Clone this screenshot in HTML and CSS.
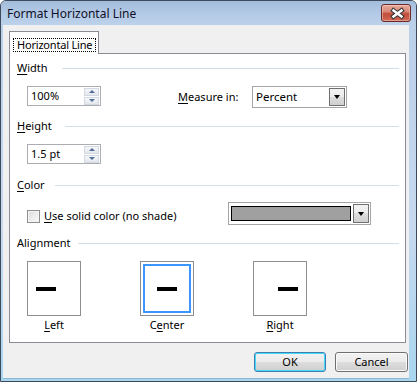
FILE: index.html
```html
<!DOCTYPE html>
<html>
<head>
<meta charset="utf-8">
<link rel="stylesheet" href="styles.css">
</head>
<body>
<div class="window">
  <div class="titlebar">
    <span class="title">Format Horizontal Line</span>
    <div class="close">
      <svg width="30" height="18" viewBox="0 0 30 18">
        <path d="M12.5 6.5 L20.5 12.5 M20.5 6.5 L12.5 12.5" stroke="#3a3a3a" stroke-width="4.6" stroke-linecap="square" fill="none"/>
        <path d="M12.5 6.5 L20.5 12.5 M20.5 6.5 L12.5 12.5" stroke="#ffffff" stroke-width="2.4" stroke-linecap="square" fill="none"/>
      </svg>
    </div>
  </div>
  <div class="client">
    <div class="tabs">
      <div class="tab"><span class="focus">Horizontal Line</span></div>
    </div>
    <div class="panel">
      <div class="ghead gh-width"><span><u>W</u>idth</span><i class="rule"></i></div>
      <div class="row row-width">
        <div class="spin"><span class="val">100%</span><div class="spin-btns"><b class="sb up"></b><b class="sb down"></b></div></div>
        <span class="measure"><u>M</u>easure in:</span>
        <div class="select"><span class="sel-text">Percent</span><div class="drop-btn"><i class="arrow"></i></div></div>
      </div>

      <div class="ghead gh-height"><span><u>H</u>eight</span><i class="rule"></i></div>
      <div class="row row-height">
        <div class="spin"><span class="val">1.5 pt</span><div class="spin-btns"><b class="sb up"></b><b class="sb down"></b></div></div>
      </div>

      <div class="ghead gh-color"><span><u>C</u>olor</span><i class="rule"></i></div>
      <div class="row row-color">
        <div class="check-wrap"><i class="checkbox"></i><span><u>U</u>se solid color (no shade)</span></div>
        <div class="color-select"><div class="swatch"></div><div class="drop-btn"><i class="arrow"></i></div></div>
      </div>

      <div class="ghead gh-align"><span>Alignment</span><i class="rule"></i></div>
      <div class="row row-align">
        <div class="opt">
          <div class="abox left"><i class="dash"></i></div>
          <span class="olabel"><u>L</u>eft</span>
        </div>
        <div class="opt">
          <div class="abox center selected"><i class="dash"></i></div>
          <span class="olabel">C<u>e</u>nter</span>
        </div>
        <div class="opt">
          <div class="abox right"><i class="dash"></i></div>
          <span class="olabel"><u>R</u>ight</span>
        </div>
      </div>
    </div>
    <div class="buttons">
      <div class="btn default">OK</div>
      <div class="btn">Cancel</div>
    </div>
  </div>
</div>
</body>
</html>
```
FILE: styles.css
```css
* { box-sizing: border-box; }
html, body { margin: 0; padding: 0; }
body {
  font-family: "Noto Sans", "Open Sans", sans-serif;
  font-size: 11px;
  line-height: 14px;
  color: #000;
  background: #fff;
}
u { text-decoration: underline; text-underline-offset: 2px; }

.window {
  width: 417px;
  height: 382px;
  display: flex;
  flex-direction: column;
  border: 1px solid #3c4a5c;
  border-radius: 6px 6px 0 0;
  background: linear-gradient(#b9cfe8, #c6d9ef 60%, #a9d6ef);
  overflow: hidden;
}

.titlebar {
  height: 24px;
  flex: none;
  display: flex;
  align-items: flex-start;
  background: linear-gradient(#a4bddc, #b5cbe6 60%, #bcd1ea);
}
.title {
  margin-left: 6px;
  margin-top: 6px;
  font-size: 12px;
  line-height: 14px;
  color: #101028;
}
.close {
  margin-left: auto;
  margin-right: 5px;
  margin-top: 3px;
  width: 30px;
  height: 18px;
  border: 1px solid #6a2b26;
  border-radius: 3px;
  background: linear-gradient(#e6ab9c, #d98a78 40%, #c24c39 55%, #d06a55 100%);
  box-shadow: inset 0 0 0 1px rgba(255,220,210,0.45);
  position: relative;
}
.close svg { position: absolute; left: -1px; top: -1px; }

.client {
  flex: 1;
  margin: 0 7px 2px 2px;
  background: #f0f0f0;
  padding: 6px 1px 0 6px;
  display: flex;
  flex-direction: column;
  border-bottom: 1px solid #8fb7d6;
}

.tabs { display: flex; height: 22px; position: relative; z-index: 1; }
.tab {
  width: 90px;
  height: 23px;
  border: 1px solid #898c95;
  border-bottom: none;
  background: #fff;
  padding: 6px 0 0 3px;
  white-space: nowrap;
}
.focus {
  display: inline-block;
  border: 1px dotted #000;
  padding: 0 3px 0 3px;
  height: 14px;
  line-height: 12px;
  white-space: nowrap;
  letter-spacing: -0.2px;
}

.panel {
  width: 397px;
  height: 290px;
  border: 1px solid #898c95;
  background: #fff;
  padding: 7px 6px 0 7px;
  display: flex;
  flex-direction: column;
}

.ghead { display: flex; align-items: center; height: 14px; }
.rule { flex: 1; height: 1px; background: #d5dde6; }
.gh-width .rule { margin-left: 14px; }
.gh-height { margin-top: 11px; }
.gh-height .rule { margin-left: 13px; }
.gh-color { margin-top: 14px; }
.gh-color .rule { margin-left: 10px; }
.gh-align { margin-top: 11px; }
.gh-align .rule { margin-left: 7px; }

.row { display: flex; align-items: flex-start; padding-left: 10px; }
.row-width { margin-top: 11px; height: 22px; }
.row-height { margin-top: 11px; height: 20px; }
.row-color { margin-top: 10px; height: 23px; }
.row-align { margin-top: 11px; gap: 59px; }

.spin {
  width: 74px;
  height: 20px;
  border: 1px solid #abadb3;
  display: flex;
  align-items: center;
  padding: 1px;
}
.val { padding-left: 2px; flex: 1; }
.spin-btns { width: 15px; height: 17px; display: flex; flex-direction: column; gap: 1px; }
.sb {
  flex: 1;
  border: 1px solid #d3d9e2;
  background: linear-gradient(#f6f7f9, #e3e7ec);
  display: flex;
  align-items: center;
  justify-content: center;
}
.sb::after {
  content: "";
  width: 0; height: 0;
  border-left: 3px solid transparent;
  border-right: 3px solid transparent;
}
.up::after { border-bottom: 3px solid #4f6d98; }
.down::after { border-top: 3px solid #4f6d98; }

.measure { width: 74px; margin-left: 77px; margin-top: 4px; }

.select {
  width: 95px;
  height: 22px;
  border: 1px solid #a5a5a5;
  display: flex;
  align-items: center;
  padding: 1px;
}
.sel-text { flex: 1; padding-left: 2px; font-size: 11.5px; }
.drop-btn {
  width: 16px;
  height: 100%;
  border: 1px solid #707070;
  background: linear-gradient(#f2f2f2, #ebebeb 50%, #dddddd 50%, #cfcfcf);
  display: flex;
  align-items: center;
  justify-content: center;
}
.arrow {
  width: 0; height: 0;
  border-left: 3.5px solid transparent;
  border-right: 3.5px solid transparent;
  border-top: 4px solid #000;
}

.check-wrap { width: 201px; display: flex; align-items: center; margin-top: 7px; gap: 4px; }
.checkbox {
  width: 13px; height: 13px;
  border: 1px solid #8f8f8f;
  background: linear-gradient(135deg, #dcdcdc, #fbfbfb);
  box-shadow: inset 0 0 0 1px #f4f4f4;
}
.color-select {
  width: 143px;
  height: 23px;
  border: 1px solid #a5a5a5;
  display: flex;
  align-items: center;
  padding: 1px 1px 1px 2px;
  gap: 2px;
}
.swatch {
  width: 123px;
  height: 15px;
  border: 1px solid #000;
  background: #a0a0a0;
}
.color-select .drop-btn { width: 16px; height: 19px; }

.opt { width: 54px; display: flex; flex-direction: column; align-items: center; }
.abox {
  width: 54px;
  height: 55px;
  border: 1px solid #8e8e8f;
  display: flex;
  align-items: center;
  padding: 2px 8px;
}
.abox.center { justify-content: center; padding: 2px; }
.abox.right { justify-content: flex-end; }
.abox.selected {
  position: relative;
}
.abox.selected::before {
  content: "";
  position: absolute;
  left: 2px; top: 2px; right: 2px; bottom: 2px;
  border: 2px solid #3d95ff;
}
.dash { width: 20px; height: 4px; background: #000; margin-top: 1px; }
.olabel { margin-top: 2px; }

.buttons {
  display: flex;
  justify-content: flex-end;
  gap: 9px;
  margin-top: 9px;
  padding-right: 0;
}
.btn {
  width: 73px;
  height: 20px;
  border: 1px solid #707070;
  border-radius: 3px;
  background: linear-gradient(#f2f2f2, #ebebeb 50%, #dddddd 50%, #cfcfcf);
  box-shadow: inset 0 0 0 1px #fbfbfb;
  text-align: center;
  line-height: 18px;
}
.btn.default {
  width: 72px;
  border-color: #3c7fb1;
  box-shadow: inset 0 0 0 1px #48d8fb;
}
```
